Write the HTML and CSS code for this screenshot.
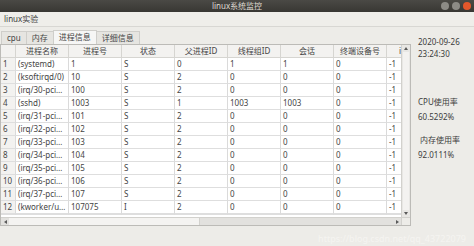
FILE: index.html
```html
<!DOCTYPE html>
<html lang="zh-CN">
  <head>
    <meta charset="UTF-8" />
    <title>linux系统监控</title>
    <link rel="stylesheet" href="styles.css">
  </head>
  <body>
    <header class="titlebar">
      <span></span>
      <span class="title">linux系统监控</span>
      <span class="controls">
        <i class="btn"></i>
        <i class="btn"></i>
        <i class="btn close"></i>
      </span>
    </header>

    <nav class="menubar">
      <span class="menu-item">linux实验</span>
    </nav>

    <main class="content">
      <section class="tabs-panel">
        <div class="tabs">
          <span class="tab">cpu</span>
          <span class="tab">内存</span>
          <span class="tab active">进程信息</span>
          <span class="tab">详细信息</span>
        </div>

        <div class="view">
          <div class="table-area">
            <table class="proc-table">
              <colgroup>
                <col class="c-num">
                <col class="c-data">
                <col class="c-data">
                <col class="c-data">
                <col class="c-data">
                <col class="c-data">
                <col class="c-data">
                <col class="c-data">
                <col class="c-last">
              </colgroup>
              <thead>
                <tr>
                  <th></th>
                  <th>进程名称</th>
                  <th>进程号</th>
                  <th>状态</th>
                  <th>父进程ID</th>
                  <th>线程组ID</th>
                  <th>会话</th>
                  <th>终端设备号</th>
                  <th class="clipped">i</th>
                </tr>
              </thead>
              <tbody>
                <tr><th>1</th><td>(systemd)</td><td>1</td><td>S</td><td>0</td><td>1</td><td>1</td><td>0</td><td>-1</td></tr>
                <tr><th>2</th><td>(ksoftirqd/0)</td><td>10</td><td>S</td><td>2</td><td>0</td><td>0</td><td>0</td><td>-1</td></tr>
                <tr><th>3</th><td>(irq/30-pci…</td><td>100</td><td>S</td><td>2</td><td>0</td><td>0</td><td>0</td><td>-1</td></tr>
                <tr><th>4</th><td>(sshd)</td><td>1003</td><td>S</td><td>1</td><td>1003</td><td>1003</td><td>0</td><td>-1</td></tr>
                <tr><th>5</th><td>(irq/31-pci…</td><td>101</td><td>S</td><td>2</td><td>0</td><td>0</td><td>0</td><td>-1</td></tr>
                <tr><th>6</th><td>(irq/32-pci…</td><td>102</td><td>S</td><td>2</td><td>0</td><td>0</td><td>0</td><td>-1</td></tr>
                <tr><th>7</th><td>(irq/33-pci…</td><td>103</td><td>S</td><td>2</td><td>0</td><td>0</td><td>0</td><td>-1</td></tr>
                <tr><th>8</th><td>(irq/34-pci…</td><td>104</td><td>S</td><td>2</td><td>0</td><td>0</td><td>0</td><td>-1</td></tr>
                <tr><th>9</th><td>(irq/35-pci…</td><td>105</td><td>S</td><td>2</td><td>0</td><td>0</td><td>0</td><td>-1</td></tr>
                <tr><th>10</th><td>(irq/36-pci…</td><td>106</td><td>S</td><td>2</td><td>0</td><td>0</td><td>0</td><td>-1</td></tr>
                <tr><th>11</th><td>(irq/37-pci…</td><td>107</td><td>S</td><td>2</td><td>0</td><td>0</td><td>0</td><td>-1</td></tr>
                <tr><th>12</th><td>(kworker/u…</td><td>107075</td><td>I</td><td>2</td><td>0</td><td>0</td><td>0</td><td>-1</td></tr>
                <tr><th></th><td></td><td></td><td></td><td></td><td></td><td></td><td></td><td></td></tr>
              </tbody>
            </table>
          </div>

          <div class="vscroll">
            <span class="arrow up"></span>
            <span class="track"></span>
            <span class="arrow down"></span>
          </div>

          <div class="hscroll">
            <span class="arrow left"></span>
            <span class="thumb"></span>
            <span class="track"></span>
            <span class="arrow right"></span>
          </div>

          <div class="corner"></div>
        </div>
      </section>

      <aside class="side">
        <p class="date">2020-09-26</p>
        <p class="time">23:24:30</p>
        <p class="label cpu-label">CPU使用率</p>
        <p class="value">60.5292%</p>
        <p class="label mem-label">内存使用率</p>
        <p class="value">92.0111%</p>
      </aside>
    </main>

    <footer class="watermark">https://blog.csdn.net/qq_43722079</footer>
  </body>
</html>
```

FILE: styles.css
```css
body {
  margin: 0;
  width: 474px;
  height: 246px;
  overflow: hidden;
  background-color: #edece8;
  font-family: "Noto Sans", "Noto Sans CJK SC", sans-serif;
  font-size: 8px;
  color: #3c3c3c;
}
p {
  margin: 0;
}

/* window title bar */
.titlebar {
  height: 12px;
  display: grid;
  grid-template-columns: 1fr auto 1fr;
  align-items: center;
  background: linear-gradient(#4a4945, #383733);
  color: #dfdbd2;
  line-height: 12px;
}
.controls {
  display: flex;
  justify-content: flex-end;
  gap: 3px;
  padding-right: 3px;
}
.btn {
  width: 8px;
  height: 8px;
  border-radius: 50%;
  background-color: #8c8b86;
}
.btn.close {
  background-color: #e4572b;
}

/* menu bar */
.menubar {
  height: 14px;
  line-height: 14px;
  padding-left: 4px;
  border-bottom: 1px solid #d8d7d3;
  margin-bottom: 4px;
  background-color: #efeeea;
}

.content {
  display: flex;
}

/* tabs */
.tabs-panel {
  width: 411px;
}
.tabs {
  height: 13px;
  display: flex;
  align-items: flex-end;
  padding-left: 1px;
}
.tab {
  height: 12px;
  line-height: 12px;
  padding: 0 5px;
  background-color: #e6e5e1;
  border: 1px solid #cfceca;
  border-bottom: none;
  margin-right: -1px;
  color: #444;
}
.tab.active {
  height: 13px;
  background-color: #f6f6f5;
  position: relative;
  z-index: 1;
}

/* table view */
.view {
  display: grid;
  grid-template-columns: 400px 9px;
  grid-template-rows: 172px 8px;
  border: 1px solid #bcbbb7;
  background-color: #fff;
}
.table-area {
  overflow: hidden;
}
.proc-table {
  table-layout: fixed;
  border-collapse: separate;
  border-spacing: 0;
  width: 400px;
  color: #444;
}
.c-num {
  width: 15px;
}
.c-data {
  width: 53px;
}
.c-last {
  width: 14px;
}
.proc-table th,
.proc-table td {
  padding: 0 2px;
  line-height: 12px;
  white-space: nowrap;
  overflow: hidden;
  border-right: 1px solid #dadada;
  border-bottom: 1px solid #dedede;
  font-weight: normal;
  text-align: left;
}
.proc-table thead th {
  background-color: #f3f2f0;
  text-align: center;
  border-right-color: #d6d5d1;
  border-bottom-color: #d6d5d1;
}
.proc-table thead th.clipped {
  text-align: right;
  padding-right: 0;
}
.proc-table tbody th {
  background-color: #f3f2f0;
}
.proc-table tr > :last-child {
  border-right: none;
}

/* scrollbars */
.vscroll {
  display: flex;
  flex-direction: column;
  background-color: #e8e7e4;
  border-left: 1px solid #d2d1cd;
}
.hscroll {
  display: flex;
  background-color: #e2e1de;
  border-top: 1px solid #d2d1cd;
}
.arrow {
  width: 8px;
  height: 7px;
  display: flex;
  align-items: center;
  justify-content: center;
}
.arrow::before {
  content: "";
  border: 2px solid transparent;
}
.arrow.up::before {
  border-top: none;
  border-bottom: 3px solid #5a5a5a;
}
.arrow.down::before {
  border-bottom: none;
  border-top: 3px solid #5a5a5a;
}
.arrow.left::before {
  border-left: none;
  border-right: 3px solid #5a5a5a;
}
.arrow.right::before {
  border-right: none;
  border-left: 3px solid #5a5a5a;
}
.vscroll .track {
  flex: 1;
  background-color: #f3f2f0;
  margin: 0 1px;
}
.hscroll .thumb {
  width: 190px;
  background-color: #f4f3f1;
  border-right: 1px solid #d2d1cd;
}
.hscroll .track {
  flex: 1;
}
.corner {
  background-color: #edece8;
  border-top: 1px solid #d2d1cd;
  border-left: 1px solid #d2d1cd;
}

/* right side info */
.side {
  flex: 1;
  padding: 5px 0 0 7px;
  line-height: 12px;
  color: #3c3c3c;
}
.cpu-label {
  margin-top: 36px;
}
.mem-label {
  margin-top: 11px;
  padding-left: 2px;
}
.value {
  margin-top: 3px;
}

.watermark {
  text-align: right;
  padding: 6px 8px 0 0;
  color: #f5f4f1;
  font-size: 9px;
}
```
